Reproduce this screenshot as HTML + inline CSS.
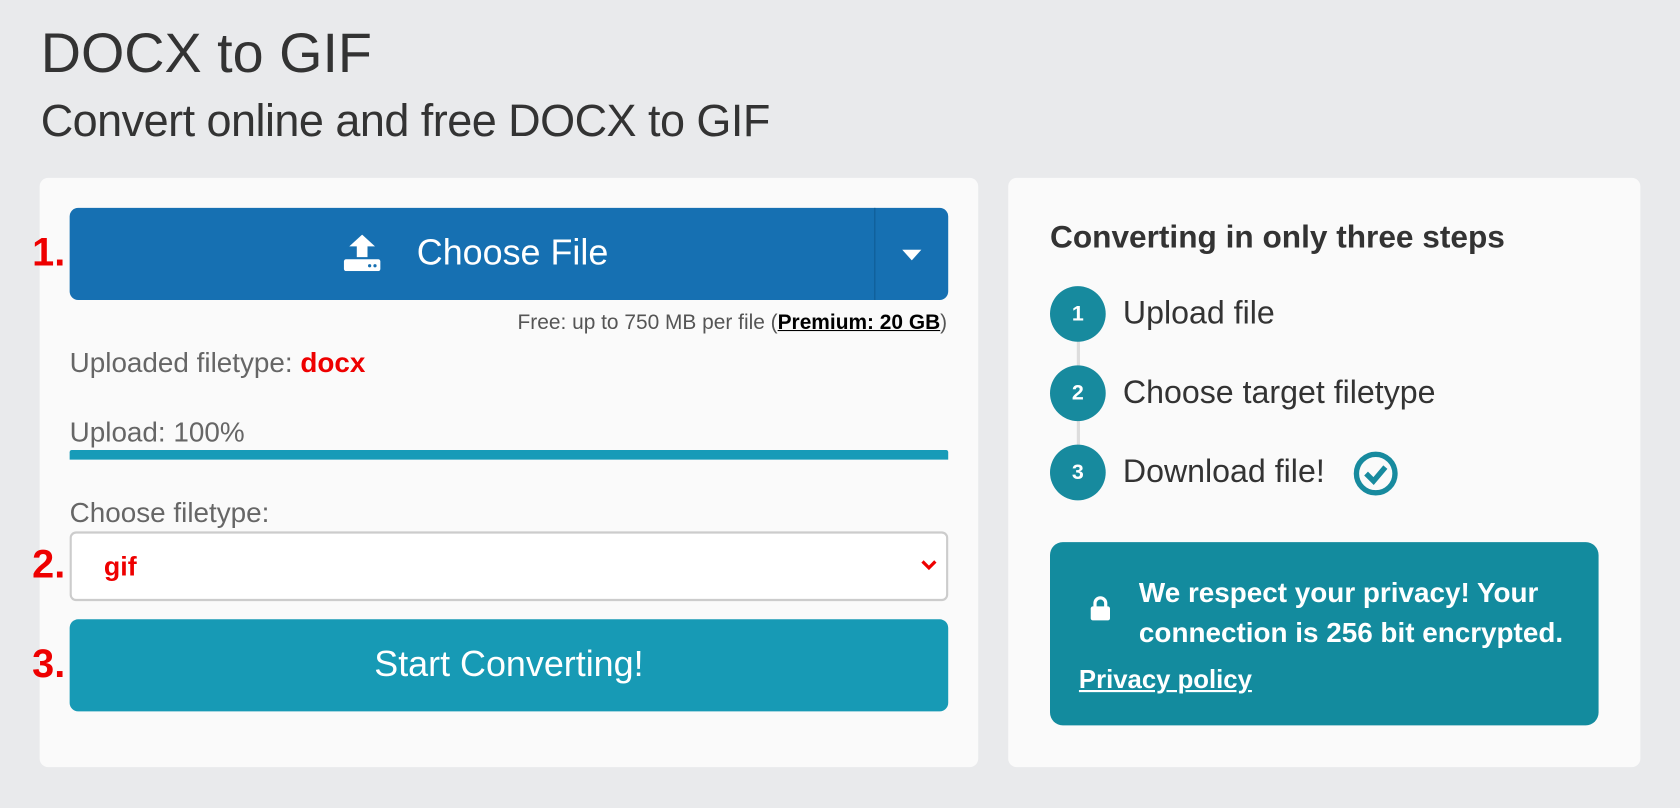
<!DOCTYPE html>
<html><head><style>
html,body{margin:0;padding:0;width:1680px;height:808px;overflow:hidden;background:#e9eaec;}
#w{position:absolute;left:0;top:0;width:1568px;height:754px;transform:scale(1.071429);transform-origin:0 0;font-family:"Liberation Sans",sans-serif;color:#333;}
.a{position:absolute;white-space:nowrap;}
.card{position:absolute;background:#fafafa;border-radius:8px;}
.num{position:absolute;color:#e00;font-weight:bold;font-size:37px;}
.circ{position:absolute;width:52px;height:52px;border-radius:50%;background:#178a9e;color:#fff;font-weight:bold;font-size:20px;text-align:center;line-height:52px;left:980px;}
.st{position:absolute;left:1048px;font-size:30px;color:#333;white-space:nowrap;}
</style></head><body><div id="w">
<div class="a" style="left:38px;top:20px;font-size:52px;color:#333;">DOCX to GIF</div>
<div class="a" style="left:38px;top:89px;font-size:42px;color:#333;letter-spacing:-0.5px;">Convert online and free DOCX to GIF</div>

<div class="card" style="left:37px;top:166px;width:876px;height:550px;"></div>
<div class="card" style="left:941px;top:166px;width:590px;height:550px;"></div>

<div class="num" style="left:30px;top:215px;">1.</div>
<div class="a" style="left:65px;top:194px;width:820px;height:86px;background:#1670b2;border-radius:8px;"></div>
<div class="a" style="left:816px;top:194px;width:1px;height:86px;background:#0f5c94;"></div>
<svg class="a" style="left:320px;top:219px" width="36" height="34" viewBox="0 0 36 34"><path d="M18 0 L30 11 H23 V21 H13 V11 H6 Z" fill="#fff"/><rect x="1" y="23" width="34" height="11" rx="2" fill="#fff"/><circle cx="25" cy="29" r="1.5" fill="#1670b2"/><circle cx="30" cy="29" r="1.5" fill="#1670b2"/></svg>
<div class="a" style="left:389px;top:218px;font-size:33.5px;color:#fff;">Choose File</div>
<svg class="a" style="left:842px;top:233px" width="18" height="10"><path d="M0 0 H18 L9 10 Z" fill="#fff"/></svg>
<div class="a" style="right:684px;top:290px;font-size:19.5px;color:#555;">Free: up to 750 MB per file (<b style="color:#000;text-decoration:underline;">Premium: 20 GB</b>)</div>
<div class="a" style="left:65px;top:323px;font-size:26px;color:#666;">Uploaded filetype: <b style="color:#e00;">docx</b></div>
<div class="a" style="left:65px;top:388px;font-size:26px;color:#666;">Upload: 100%</div>
<div class="a" style="left:65px;top:420px;width:820px;height:9px;background:#179bb8;border-radius:2px 2px 0 0;"></div>
<div class="a" style="left:65px;top:463px;font-size:26px;color:#666;">Choose filetype:</div>
<div class="num" style="left:30px;top:506px;">2.</div>
<div class="a" style="left:65px;top:496px;width:816px;height:61px;background:#fff;border:2px solid #ccc;border-radius:6px;"></div>
<div class="a" style="left:97px;top:515px;font-size:25px;color:#e00;font-weight:bold;">gif</div>
<svg class="a" style="left:859px;top:522px" width="16" height="11"><path d="M2 2 L8 8 L14 2" stroke="#e00" stroke-width="3" fill="none"/></svg>
<div class="num" style="left:30px;top:599px;">3.</div>
<div class="a" style="left:65px;top:578px;width:820px;height:86px;background:#179ab5;border-radius:8px;"></div>
<div class="a" style="left:65px;top:602px;width:820px;text-align:center;font-size:33.5px;color:#fff;">Start Converting!</div>

<div class="a" style="left:980px;top:205px;font-size:29.5px;font-weight:bold;color:#333;">Converting in only three steps</div>
<div class="a" style="left:1005px;top:300px;width:3px;height:140px;background:#ddd;"></div>
<div class="circ" style="top:267px;">1</div><div class="st" style="top:276px;">Upload file</div>
<div class="circ" style="top:341px;">2</div><div class="st" style="top:350px;">Choose target filetype</div>
<div class="circ" style="top:415px;">3</div><div class="st" style="top:424px;">Download file!</div>
<svg class="a" style="left:1262px;top:420px" width="44" height="44" viewBox="0 0 44 44"><circle cx="22" cy="22" r="18" stroke="#178a9e" stroke-width="5" fill="none"/><path d="M13 22 L20 29 L31 16" stroke="#178a9e" stroke-width="5" fill="none"/></svg>

<div class="a" style="left:980px;top:506px;width:512px;height:171px;background:#138b9e;border-radius:12px;"></div>
<svg class="a" style="left:1017px;top:556px" width="20" height="24" viewBox="0 0 20 24"><path d="M5 11 V7 a5 5 0 0 1 10 0 V11" stroke="#fff" stroke-width="3" fill="none"/><rect x="1" y="10" width="18" height="13" rx="2" fill="#fff"/></svg>
<div class="a" style="left:1063px;top:535px;font-size:26px;line-height:37px;font-weight:bold;color:#fff;">We respect your privacy! Your<br>connection is 256 bit encrypted.</div>
<div class="a" style="left:1007px;top:621px;font-size:24px;font-weight:bold;color:#fff;text-decoration:underline;">Privacy policy</div>
</div></body></html>
